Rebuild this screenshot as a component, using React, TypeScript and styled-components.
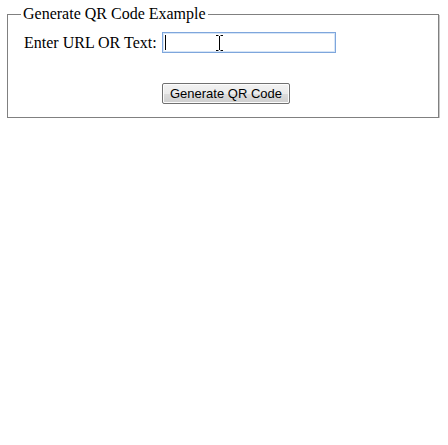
import styled, { createGlobalStyle } from "styled-components"

const GlobalStyle = createGlobalStyle`
  html, body {
    margin: 0;
    padding: 0;
    background: #ffffff;
  }
  body {
    font-family: "Liberation Serif", "Times New Roman", serif;
    font-size: 16px;
    color: #000000;
  }
`

const Page = styled.div`
  padding: 5px 0 0 7px;
`

const Frame = styled.fieldset`
  box-sizing: border-box;
  width: 432px;
  margin: 0;
  padding: 9px 16px 13px 16px;
  border: 1px solid #808080;
  box-shadow: 1px 1px 0 #c8c8c8;
`

const Caption = styled.legend`
  padding: 0 2px;
  margin-left: -3px;
  font-size: 16px;
  line-height: 18px;
`

const FormGrid = styled.div`
  display: grid;
  grid-template-columns: 138px 174px;
  row-gap: 30px;
  align-items: center;
`

const Label = styled.label`
  font-size: 16px;
  line-height: 18px;
  white-space: nowrap;
`

const InputWrap = styled.div`
  position: relative;
  width: 174px;
  height: 21px;
`

const TextInput = styled.input`
  box-sizing: border-box;
  width: 100%;
  height: 100%;
  margin: 0;
  padding: 1px 3px;
  border: 1px solid #7ea6dc;
  box-shadow: inset 0 0 0 1px #d6e5f7;
  font-family: "Liberation Sans", Arial, sans-serif;
  font-size: 13px;
  outline: none;
  background: #ffffff;
`

const Caret = styled.span`
  position: absolute;
  left: 3px;
  top: 3px;
  width: 1px;
  height: 15px;
  background: #000000;
`

const Pointer = styled.svg`
  position: absolute;
  left: 54px;
  top: 3px;
  pointer-events: none;
`

const Spacer = styled.div``

const Button = styled.button`
  box-sizing: border-box;
  width: 128px;
  height: 21px;
  margin: 0;
  padding: 0;
  border: 1px solid #707070;
  border-radius: 2px;
  box-shadow: inset 0 0 0 1px #fcfcfc;
  background: linear-gradient(#f2f2f2 0%, #ebebeb 50%, #dddddd 51%, #cfcfcf 100%);
  font-family: "Liberation Sans", Arial, sans-serif;
  font-size: 13px;
  color: #000000;
`

export default function App() {
  return (
    <Page>
      <GlobalStyle />
      <Frame>
        <Caption>Generate QR Code Example</Caption>
        <FormGrid>
          <Label htmlFor="qr-text">Enter URL OR Text:</Label>
          <InputWrap>
            <TextInput id="qr-text" type="text" />
            <Caret />
            <Pointer width="7" height="16" viewBox="0 0 7 16">
              <path d="M0 0.5h2.5M4.5 0.5h2.5M3.5 1v14M0 15.5h2.5M4.5 15.5h2.5" stroke="#000" strokeWidth="1" fill="none" />
            </Pointer>
          </InputWrap>
          <Spacer />
          <Button type="button">Generate QR Code</Button>
        </FormGrid>
      </Frame>
    </Page>
  )
}
